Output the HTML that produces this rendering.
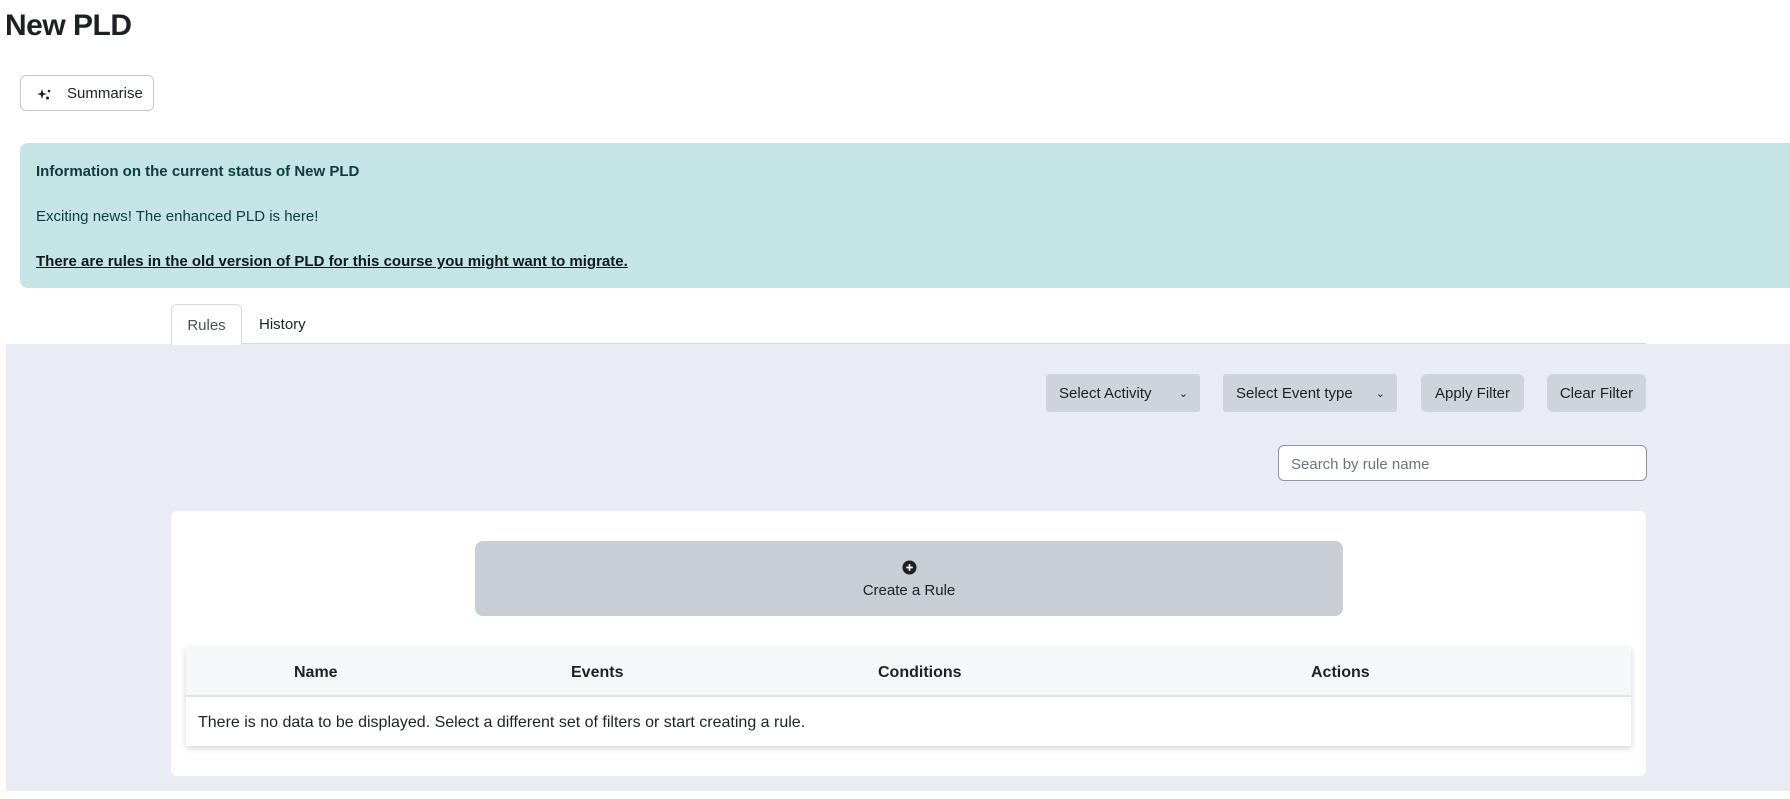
<!DOCTYPE html>
<html><head><meta charset="utf-8"><style>
*{box-sizing:border-box;margin:0;padding:0}
body{width:1790px;height:799px;background:#fff;font-family:"Liberation Sans",sans-serif;color:#1d2125;position:relative;overflow:hidden;font-size:15px}
.a{position:absolute}
h1{position:absolute;left:5px;top:9px;font-size:30px;font-weight:bold;letter-spacing:-0.5px}
.btn{position:absolute;display:flex;align-items:center;justify-content:center;border-radius:6px;background:#ced4da;font-size:15px;color:#1d2125}
</style></head><body>
<h1>New PLD</h1>
<div class="a" style="left:20px;top:75px;width:134px;height:36px;border:1px solid #c5c9ce;border-radius:6px;display:flex;align-items:center;padding-left:14px;font-size:15px;padding-top:1px">
<svg width="22" height="16" viewBox="0 0 22 16"><path d="M7 3 L8.3 7 L12 8 L8.3 9 L7 13 L5.7 9 L2 8 L5.7 7Z" fill="#1d2125"/><circle cx="14" cy="5" r="1.3" fill="#1d2125"/><circle cx="12.5" cy="12" r="1.5" fill="#1d2125"/></svg>
<span style="margin-left:10px">Summarise</span></div>
<div class="a" style="left:20px;top:143px;width:1780px;height:145px;background:#c5e4e6;border-radius:8px;color:#0d3b3e;font-size:15px">
<div class="a" style="left:16px;top:20px;font-weight:bold">Information on the current status of New PLD</div>
<div class="a" style="left:16px;top:65px">Exciting news! The enhanced PLD is here!</div>
<div class="a" style="left:16px;top:110px;font-weight:bold;text-decoration:underline;color:#0f1a1c">There are rules in the old version of PLD for this course you might want to migrate.</div>
</div>
<div class="a" style="left:6px;top:344px;width:1784px;height:447px;background:#e9ecf4"></div>
<div class="a" style="left:171px;top:343px;width:1475px;height:1px;background:#d6dae0"></div>
<div class="a" style="left:171px;top:304px;width:71px;height:41px;background:#fff;border:1px solid #d6dae0;border-bottom:none;border-radius:6px 6px 0 0;display:flex;align-items:center;justify-content:center;color:#495057">Rules</div>
<div class="a" style="left:259px;top:316px">History</div>
<div class="btn" style="left:1046px;top:374px;width:154px;height:38px;justify-content:flex-start;padding-left:13px;border-radius:3px;padding-top:1px">Select Activity<span style="position:absolute;right:12px;font-size:11px">&#8964;</span></div>
<div class="btn" style="left:1223px;top:374px;width:174px;height:38px;justify-content:flex-start;padding-left:13px;border-radius:3px;padding-top:1px">Select Event type<span style="position:absolute;right:12px;font-size:11px">&#8964;</span></div>
<div class="btn" style="left:1421px;top:374px;width:103px;height:38px;padding-top:1px">Apply Filter</div>
<div class="btn" style="left:1547px;top:374px;width:99px;height:38px;padding-top:1px">Clear Filter</div>
<div class="a" style="left:1278px;top:445px;width:369px;height:36px;background:#fff;border:1px solid #8f959e;border-radius:6px;padding:10px 12px;color:#6a737b">Search by rule name</div>
<div class="a" style="left:171px;top:511px;width:1475px;height:265px;background:#fff;border-radius:6px"></div>
<div class="btn" style="left:475px;top:541px;width:868px;height:75px;flex-direction:column;background:#c9cdd4;border-radius:8px;padding-top:2px">
<svg width="15" height="15" viewBox="0 0 16 16"><circle cx="8" cy="8" r="7.5" fill="#1d2125"/><path d="M8 4.5v7M4.5 8h7" stroke="#fff" stroke-width="1.8"/></svg>
<div style="margin-top:7px">Create a Rule</div></div>
<div class="a" style="left:186px;top:647px;width:1445px;height:99px;background:#fff;box-shadow:0 2px 6px rgba(0,0,0,.18)">
<div class="a" style="left:0;top:0;width:100%;height:50px;background:#f6f7f9;border-bottom:2px solid #dee2e6;font-weight:bold;font-size:16px">
<span class="a" style="left:108px;top:17px">Name</span>
<span class="a" style="left:385px;top:17px">Events</span>
<span class="a" style="left:692px;top:17px">Conditions</span>
<span class="a" style="left:1125px;top:17px">Actions</span></div>
<div class="a" style="left:12px;top:67px;font-size:16px">There is no data to be displayed. Select a different set of filters or start creating a rule.</div>
</div>
</body></html>
